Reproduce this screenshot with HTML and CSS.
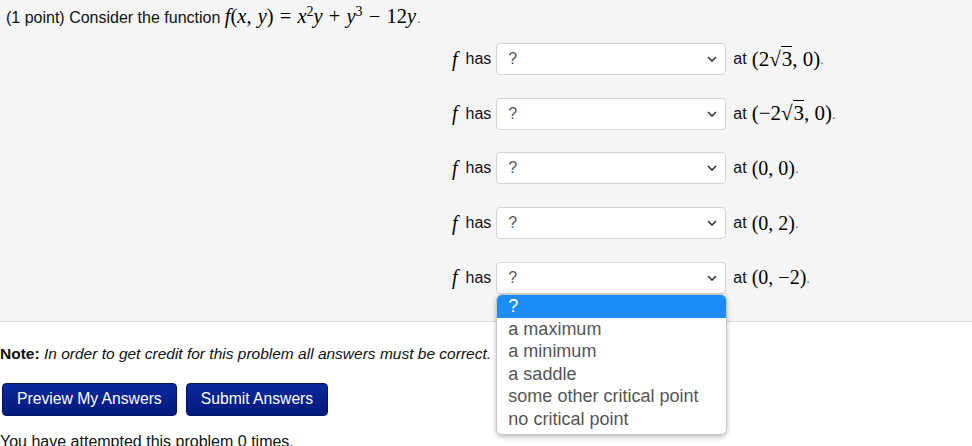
FILE: index.html
```html
<!DOCTYPE html>
<html lang="en">
	<head>
		<meta charset="UTF-8" />
		<title>Problem</title>
		<link rel="stylesheet" href="styles.css">
	</head>
	<body>
		<div class="problem">
			<div class="problem-title">
				(1 point) Consider the function
				<span class="math"><i>f</i>(<i>x</i>, <i>y</i>) = <i>x</i><sup>2</sup><i>y</i> + <i>y</i><sup>3</sup> &minus; 12<i>y</i></span><span class="dot">.</span>
			</div>
			<div class="answers">
				<div class="answer-row">
					<span class="math fn"><i>f</i></span><span class="word">has</span>
					<div class="select"><span>?</span><svg class="chevron" viewBox="0 0 10 6" width="10" height="6"><path d="M1 1l4 4 4-4" /></svg></div>
					<span class="word">at</span><span class="math big">(2<span class="sqrt">√<span class="rad">3</span></span>, 0)</span><span class="dot">.</span>
				</div>
				<div class="answer-row">
					<span class="math fn"><i>f</i></span><span class="word">has</span>
					<div class="select"><span>?</span><svg class="chevron" viewBox="0 0 10 6" width="10" height="6"><path d="M1 1l4 4 4-4" /></svg></div>
					<span class="word">at</span><span class="math big">(&minus;2<span class="sqrt">√<span class="rad">3</span></span>, 0)</span><span class="dot">.</span>
				</div>
				<div class="answer-row">
					<span class="math fn"><i>f</i></span><span class="word">has</span>
					<div class="select"><span>?</span><svg class="chevron" viewBox="0 0 10 6" width="10" height="6"><path d="M1 1l4 4 4-4" /></svg></div>
					<span class="word">at</span><span class="math">(0, 0)</span><span class="dot">.</span>
				</div>
				<div class="answer-row">
					<span class="math fn"><i>f</i></span><span class="word">has</span>
					<div class="select"><span>?</span><svg class="chevron" viewBox="0 0 10 6" width="10" height="6"><path d="M1 1l4 4 4-4" /></svg></div>
					<span class="word">at</span><span class="math">(0, 2)</span><span class="dot">.</span>
				</div>
				<div class="answer-row">
					<span class="math fn"><i>f</i></span><span class="word">has</span>
					<div class="select open">
						<span>?</span><svg class="chevron" viewBox="0 0 10 6" width="10" height="6"><path d="M1 1l4 4 4-4" /></svg>
						<ul class="options">
							<li class="selected">?</li>
							<li>a maximum</li>
							<li>a minimum</li>
							<li>a saddle</li>
							<li>some other critical point</li>
							<li>no critical point</li>
						</ul>
					</div>
					<span class="word">at</span><span class="math">(0, &minus;2)</span><span class="dot">.</span>
				</div>
			</div>
		</div>
		<div class="footer">
			<p class="note"><b>Note:</b> <i>In order to get credit for this problem all answers must be correct.</i></p>
			<div class="buttons">
				<button class="btn">Preview My Answers</button>
				<button class="btn">Submit Answers</button>
			</div>
			<p class="attempts">You have attempted this problem 0 times.</p>
		</div>
	</body>
</html>
```

FILE: styles.css
```css
body {
	margin: 0;
	font-family: Arial, "Liberation Sans", sans-serif;
	font-size: 16px;
	color: #111;
	background: #fff;
	overflow: hidden;
}
.problem {
	background: #f5f5f5;
	border-bottom: 1px solid #dcdcdc;
	padding: 4px 0 27px 6px;
}
.problem-title {
	height: 34px;
	line-height: 24px;
	white-space: nowrap;
}
.math {
	font-family: "Liberation Serif", "Times New Roman", serif;
	font-size: 20px;
	color: #000;
	white-space: nowrap;
}
.problem-title .math {
	font-size: 20.5px;
	word-spacing: 1px;
}
.math sup {
	font-size: 14px;
	vertical-align: 7px;
	line-height: 0;
}
.math.big {
	font-size: 21px;
}
.rad {
	border-top: 1px solid #000;
	padding-left: 1px;
}
.dot {
	font-size: 13px;
	color: #444;
	align-self: flex-end;
	margin-bottom: 8px;
}
.problem-title .dot {
	margin-left: 1px;
}
.answers {
	margin-left: 446px;
	display: flex;
	flex-direction: column;
	gap: 22.7px;
	padding-top: 5px;
}
.answer-row {
	display: flex;
	align-items: center;
	height: 32px;
}
.fn {
	margin-right: 8px;
}
.word {
	white-space: nowrap;
}
.select {
	position: relative;
	flex: none;
	width: 230px;
	height: 32px;
	margin: 0 7px 0 5px;
	background: #fff;
	border: 1px solid #d2d2d2;
	border-radius: 4px;
	display: flex;
	align-items: center;
	justify-content: space-between;
	padding: 0 8px 0 11px;
	box-sizing: border-box;
	color: #555;
}
.select + .word {
	margin-right: 5px;
}
.chevron {
	fill: none;
	stroke: #333;
	stroke-width: 1.6;
}
.options {
	position: absolute;
	left: -1px;
	top: 31px;
	width: 231px;
	margin: 0;
	padding: 0 0 4px;
	list-style: none;
	background: #fff;
	border: 1px solid #c8c8c8;
	border-radius: 6px;
	box-shadow: 0 2px 5px rgba(0, 0, 0, 0.25);
	box-sizing: border-box;
	overflow: hidden;
	z-index: 2;
}
.options li {
	height: 22.5px;
	line-height: 22.5px;
	padding-left: 11px;
	font-size: 18px;
	color: #555;
	white-space: nowrap;
}
.options li.selected {
	background: #1e8cf8;
	color: #fff;
	height: 23px;
}
.note {
	margin: 23px 0 0 0;
	line-height: 18px;
	font-size: 15.5px;
}
.buttons {
	display: flex;
	gap: 9px;
	margin: 20px 0 0 2px;
}
.btn {
	height: 33px;
	padding: 0 14px;
	font-family: Arial, "Liberation Sans", sans-serif;
	font-size: 15.7px;
	color: #fff;
	background: linear-gradient(#0b2a9c, #03197c);
	border: 1px solid #021464;
	border-radius: 4px;
}
.attempts {
	margin: 17px 0 0 0;
}
```
